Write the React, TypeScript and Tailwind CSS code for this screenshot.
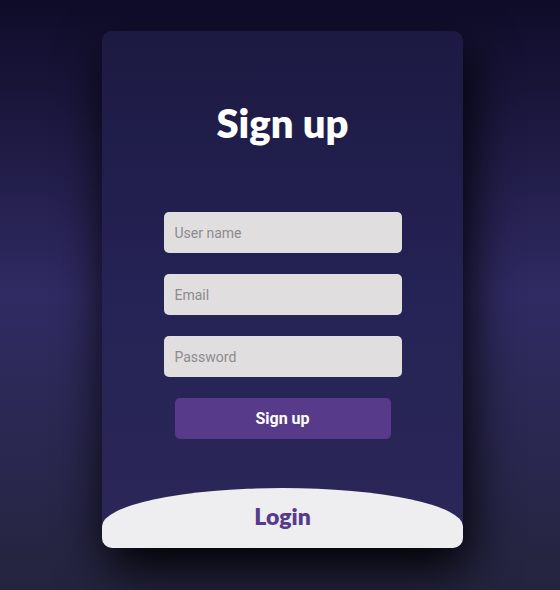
import { useState } from "react"

export default function App() {
  const [form, setForm] = useState({ user: "", email: "", password: "" })

  const inputClass =
    "w-[238px] h-[41px] shrink-0 rounded-[5px] bg-[#e0dede] pl-[11px] pr-[10px] text-[14px] text-[#333] placeholder:text-[#8d8a90] outline-none font-['Roboto',sans-serif]"

  return (
    <div className="min-h-[590px] w-full bg-gradient-to-b from-[#0f0c29] via-[#302b63] to-[#24243e] pl-[102px] pt-[31px]">
      <div className="flex h-[517px] w-[361px] flex-col overflow-hidden rounded-[10px] bg-gradient-to-b from-[#1c1a42] via-[#252255] to-[#2b2858] shadow-[5px_20px_50px_#000]">
        <div className="flex h-[457px] shrink-0 flex-col items-center pt-[62px]">
          <h1 className="text-[40px] leading-[60px] font-extrabold text-white font-['Lato',sans-serif]">Sign up</h1>
          <div className="mt-[59px] flex flex-col items-center gap-[21px]">
            <input
              className={inputClass}
              placeholder="User name"
              value={form.user}
              onChange={(e) => setForm({ ...form, user: e.target.value })}
            />
            <input
              className={inputClass}
              placeholder="Email"
              value={form.email}
              onChange={(e) => setForm({ ...form, email: e.target.value })}
            />
            <input
              className={inputClass}
              type="password"
              placeholder="Password"
              value={form.password}
              onChange={(e) => setForm({ ...form, password: e.target.value })}
            />
            <button className="h-[41px] w-[216px] rounded-[5px] bg-[#573b8a] text-[16px] font-bold text-white font-['Roboto',sans-serif]">
              Sign up
            </button>
          </div>
        </div>
        <div className="h-[460px] w-full shrink-0 rounded-[60%/10%] bg-[#eeedf0] pt-[14px] text-center">
          <span className="text-[23px] leading-[28px] font-extrabold text-[#573b8a] font-['Lato',sans-serif]">Login</span>
        </div>
      </div>
    </div>
  )
}
